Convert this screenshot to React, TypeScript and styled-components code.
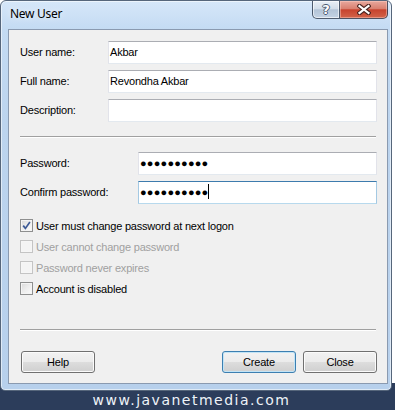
import React from "react";
import styled, { createGlobalStyle, css } from "styled-components";

const Global = createGlobalStyle`
  html, body { margin: 0; padding: 0; background: #ffffff; }
  body { width: 395px; height: 410px; overflow: hidden; }
`;

const Page = styled.div`
  width: 395px;
  height: 410px;
  background: linear-gradient(to bottom, #ffffff 0, #ffffff 383px, #2c3d5b 383px);
  display: flex;
  flex-direction: column;
`;

const Window = styled.div`
  box-sizing: border-box;
  width: 392px;
  height: 391px;
  border: 1px solid #56667b;
  border-radius: 6px 6px 5px 5px;
  background: linear-gradient(to bottom, #d6e7f9 0, #c4dbf3 28px, #bcd4ee 120px, #b7d0ec 100%);
  box-shadow: inset 0 0 0 1px rgba(255, 255, 255, 0.55);
  display: flex;
  flex-direction: column;
`;

const TitleBar = styled.div`
  height: 28px;
  display: flex;
  align-items: flex-start;
  padding: 0 3px 0 9px;
`;

const Title = styled.div`
  font-family: "Noto Sans", "Open Sans", sans-serif;
  font-size: 12px;
  line-height: 16px;
  letter-spacing: -0.3px;
  padding-top: 5px;
  color: #000;
  text-shadow: 0 0 6px rgba(255, 255, 255, 0.9);
`;

const CaptionButtons = styled.div`
  margin-left: auto;
  display: flex;
`;

const CaptionButton = styled.div<{ $kind: "help" | "close" }>`
  box-sizing: border-box;
  height: 18px;
  display: flex;
  align-items: center;
  justify-content: center;
  border: 1px solid rgba(52, 66, 86, 0.85);
  border-top: none;
  ${(p) =>
    p.$kind === "help"
      ? css`
          width: 28px;
          border-radius: 0 0 0 5px;
          background: linear-gradient(to bottom, #e9eff6 0%, #d3deea 45%, #b3c4d7 52%, #c4d3e4 100%);
          box-shadow: inset 0 0 0 1px rgba(255, 255, 255, 0.6);
        `
      : css`
          width: 48px;
          border-left: none;
          border-radius: 0 0 5px 0;
          background: linear-gradient(to bottom, #e8a99e 0%, #d98070 45%, #c7432e 52%, #d2644a 100%);
          box-shadow: inset 0 0 0 1px rgba(255, 210, 200, 0.45);
        `}
`;

const HelpGlyph = styled.span`
  font-family: "DejaVu Sans", sans-serif;
  font-weight: bold;
  font-size: 13px;
  line-height: 13px;
  color: #ffffff;
  text-shadow: 1px 0 0 #4a5a70, -1px 0 0 #4a5a70, 0 1px 0 #4a5a70, 0 -1px 0 #4a5a70;
`;

const Client = styled.div`
  box-sizing: border-box;
  margin: 0 3px 0 7px;
  width: 380px;
  height: 355px;
  border: 1px solid #8a9ab0;
  background: #f0f0f0;
  padding: 11px 10px 10px 11px;
  display: flex;
  flex-direction: column;
  font-family: "Liberation Sans", Arial, sans-serif;
  font-size: 11px;
  letter-spacing: -0.2px;
  color: #000;
`;

const FieldGrid = styled.div<{ $labelWidth: number }>`
  display: grid;
  grid-template-columns: ${(p) => p.$labelWidth}px 1fr;
  row-gap: 6px;
  align-items: center;
`;

const Label = styled.div`
  padding-bottom: 1px;
  white-space: nowrap;
`;

const TextBox = styled.div<{ $focused?: boolean }>`
  box-sizing: border-box;
  height: 23px;
  padding: 0 2px 2px 1px;
  display: flex;
  align-items: center;
  background: #ffffff;
  border: 1px solid;
  border-color: #abadb3 #e2e3ea #e3e9ef #e2e3ea;
  ${(p) =>
    p.$focused &&
    css`
      border-color: #3d7bad #a4c9e3 #b7d9ed #a4c9e3;
    `}
`;

const Dots = styled.span`
  font-family: "Liberation Sans", Arial, sans-serif;
  font-size: 11px;
  letter-spacing: 0.2px;
  padding-top: 1px;
`;

const Caret = styled.span`
  display: inline-block;
  width: 1px;
  height: 15px;
  background: #000;
`;

const Separator = styled.hr<{ $top: number; $bottom: number }>`
  box-sizing: border-box;
  height: 2px;
  margin: ${(p) => p.$top}px 1px ${(p) => p.$bottom}px 0;
  border: 0;
  border-top: 1px solid #a0a0a0;
  border-bottom: 1px solid #ffffff;
`;

const CheckList = styled.div`
  display: flex;
  flex-direction: column;
  gap: 8px;
  margin-top: 15px;
`;

const CheckRow = styled.div<{ $disabled?: boolean }>`
  display: flex;
  align-items: center;
  gap: 3px;
  height: 13px;
  white-space: nowrap;
  color: ${(p) => (p.$disabled ? "#a0a0a0" : "#000000")};
`;

const Box = styled.span<{ $disabled?: boolean }>`
  box-sizing: border-box;
  width: 13px;
  height: 13px;
  flex: none;
  display: flex;
  align-items: center;
  justify-content: center;
  border: 1px solid ${(p) => (p.$disabled ? "#c4c4c4" : "#8e8f8f")};
  background: ${(p) =>
    p.$disabled ? "#f4f4f4" : "linear-gradient(135deg, #d9d9d9 0%, #ededed 50%, #fbfbfb 100%)"};
  box-shadow: inset 0 0 0 1px ${(p) => (p.$disabled ? "#f6f6f6" : "#f4f4f4")};
`;

const ButtonBar = styled.div`
  display: flex;
  gap: 7px;
`;

const PushButton = styled.div<{ $default?: boolean; $pushRight?: boolean }>`
  box-sizing: border-box;
  width: 74px;
  height: 22px;
  display: flex;
  align-items: center;
  justify-content: center;
  padding-bottom: 1px;
  border: 1px solid ${(p) => (p.$default ? "#3c7fb1" : "#707070")};
  border-radius: 3px;
  background: linear-gradient(to bottom, #f2f2f2 0%, #ebebeb 50%, #dddddd 51%, #cfcfcf 100%);
  box-shadow: inset 0 0 0 1px ${(p) => (p.$default ? "#c2e4f6" : "#fbfbfb")};
  ${(p) =>
    p.$pushRight &&
    css`
      margin-left: auto;
    `}
`;

const HelpButton = styled(PushButton)`
  margin-left: 1px;
`;

const Footer = styled.div`
  height: 19px;
  line-height: 19px;
  text-align: center;
  padding-right: 12px;
  color: #eef3f8;
  font-family: "DejaVu Sans", sans-serif;
  font-size: 14px;
  letter-spacing: 1.5px;
`;

const CheckMark = () => (
  <svg width="9" height="9" viewBox="0 0 9 9">
    <path d="M1.2 4.6 L3.4 7.4 L7.9 0.9" fill="none" stroke="#3d5a96" strokeWidth="1.7" />
  </svg>
);

const CloseGlyph = () => (
  <svg width="14" height="11" viewBox="0 0 14 11">
    <path d="M2.5 2 L11.5 9 M11.5 2 L2.5 9" stroke="#4a2420" strokeWidth="4.4" strokeLinecap="square" />
    <path d="M2.5 2 L11.5 9 M11.5 2 L2.5 9" stroke="#ffffff" strokeWidth="2.2" strokeLinecap="square" />
  </svg>
);

const checks = [
  { text: "User must change password at next logon", checked: true, disabled: false },
  { text: "User cannot change password", checked: false, disabled: true },
  { text: "Password never expires", checked: false, disabled: true },
  { text: "Account is disabled", checked: false, disabled: false },
];

export default function App() {
  return (
    <Page>
      <Global />
      <Window>
        <TitleBar>
          <Title>New User</Title>
          <CaptionButtons>
            <CaptionButton $kind="help">
              <HelpGlyph>?</HelpGlyph>
            </CaptionButton>
            <CaptionButton $kind="close">
              <CloseGlyph />
            </CaptionButton>
          </CaptionButtons>
        </TitleBar>
        <Client>
          <FieldGrid $labelWidth={88}>
            <Label>User name:</Label>
            <TextBox>Akbar</TextBox>
            <Label>Full name:</Label>
            <TextBox>Revondha Akbar</TextBox>
            <Label>Description:</Label>
            <TextBox />
          </FieldGrid>
          <Separator $top={14} $bottom={14} />
          <FieldGrid $labelWidth={118}>
            <Label>Password:</Label>
            <TextBox>
              <Dots>●●●●●●●●●●</Dots>
            </TextBox>
            <Label>Confirm password:</Label>
            <TextBox $focused>
              <Dots>●●●●●●●●●●</Dots>
              <Caret />
            </TextBox>
          </FieldGrid>
          <CheckList>
            {checks.map((c) => (
              <CheckRow key={c.text} $disabled={c.disabled}>
                <Box $disabled={c.disabled}>{c.checked && <CheckMark />}</Box>
                {c.text}
              </CheckRow>
            ))}
          </CheckList>
          <Separator $top={34} $bottom={20} />
          <ButtonBar>
            <HelpButton>Help</HelpButton>
            <PushButton $default $pushRight>
              Create
            </PushButton>
            <PushButton>Close</PushButton>
          </ButtonBar>
        </Client>
      </Window>
      <Footer>www.javanetmedia.com</Footer>
    </Page>
  );
}
